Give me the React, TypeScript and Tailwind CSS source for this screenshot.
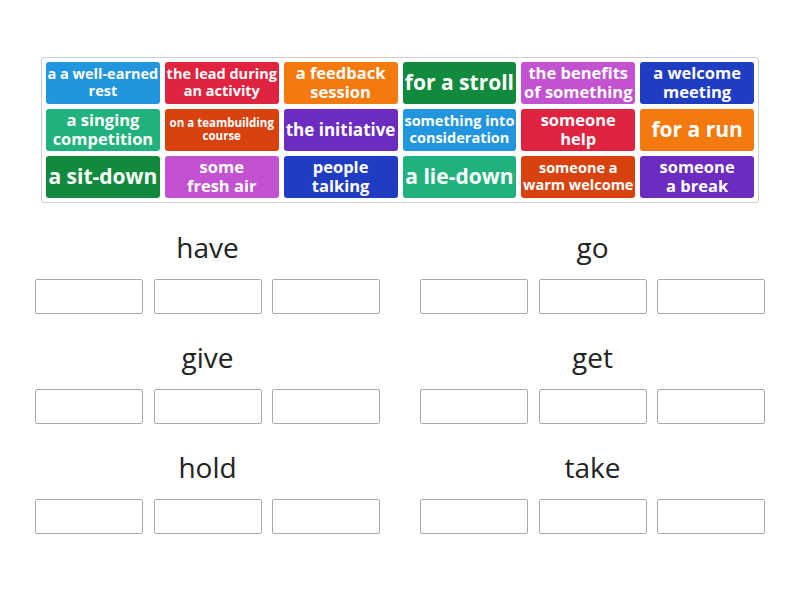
import React from "react";

interface Tile {
  text: string;
  bg: string;
  size: string;
}

const tiles: Tile[] = [
  { text: "a a well-earned rest", bg: "bg-[#2196de]", size: "text-[14.5px]" },
  { text: "the lead during an activity", bg: "bg-[#e0233f]", size: "text-[14.5px]" },
  { text: "a feedback session", bg: "bg-[#f47a0f]", size: "text-[16.5px]" },
  { text: "for a stroll", bg: "bg-[#128a3e]", size: "text-[21px]" },
  { text: "the benefits of something", bg: "bg-[#c352d1]", size: "text-[16.5px]" },
  { text: "a welcome meeting", bg: "bg-[#1f3dc3]", size: "text-[16.5px]" },
  { text: "a singing competition", bg: "bg-[#20b17c]", size: "text-[16.5px]" },
  { text: "on a teambuilding course", bg: "bg-[#d8420f]", size: "text-[11.5px]" },
  { text: "the initiative", bg: "bg-[#6b2cbf]", size: "text-[17px]" },
  { text: "something into consideration", bg: "bg-[#2196de]", size: "text-[14.5px]" },
  { text: "someone help", bg: "bg-[#e0233f]", size: "text-[16.5px]" },
  { text: "for a run", bg: "bg-[#f47a0f]", size: "text-[21px]" },
  { text: "a sit-down", bg: "bg-[#128a3e]", size: "text-[21px]" },
  { text: "some fresh air", bg: "bg-[#c352d1]", size: "text-[16.5px]" },
  { text: "people talking", bg: "bg-[#1f3dc3]", size: "text-[16.5px]" },
  { text: "a lie-down", bg: "bg-[#20b17c]", size: "text-[21px]" },
  { text: "someone a warm welcome", bg: "bg-[#d8420f]", size: "text-[14.5px]" },
  { text: "someone a break", bg: "bg-[#6b2cbf]", size: "text-[16.5px]" },
];

// two-line tiles break where the reference breaks them
const lines: Record<string, string[]> = {
  "a a well-earned rest": ["a a well-earned", "rest"],
  "the lead during an activity": ["the lead during", "an activity"],
  "a feedback session": ["a feedback", "session"],
  "the benefits of something": ["the benefits", "of something"],
  "a welcome meeting": ["a welcome", "meeting"],
  "a singing competition": ["a singing", "competition"],
  "on a teambuilding course": ["on a teambuilding", "course"],
  "something into consideration": ["something into", "consideration"],
  "someone help": ["someone", "help"],
  "some fresh air": ["some", "fresh air"],
  "people talking": ["people", "talking"],
  "someone a warm welcome": ["someone a", "warm welcome"],
  "someone a break": ["someone", "a break"],
};

const groups = ["have", "go", "give", "get", "hold", "take"];

function Group({ title }: { title: string }) {
  return (
    <div>
      <div className="h-[40px] leading-[36px] text-center text-[28px] text-[#222]">
        {title}
      </div>
      <div className="mt-[10px] flex justify-between">
        {[0, 1, 2].map((i) => (
          <div
            key={i}
            className="w-[108px] h-[35px] border border-[#aaaaaa] rounded-[2px] bg-white"
          />
        ))}
      </div>
    </div>
  );
}

export default function App() {
  return (
    <div
      className="w-[800px] h-[600px] bg-white overflow-hidden"
      style={{ fontFamily: '"Open Sans", "Noto Sans", sans-serif' }}
    >
      <div className="mx-auto mt-[57px] w-[718px] border border-[#cfcfcf] rounded-[3px] p-[4px] grid grid-cols-6 gap-[5px]">
        {tiles.map((t) => (
          <div
            key={t.text}
            className={`${t.bg} ${t.size} h-[42px] pb-[1px] rounded-[3px] flex flex-col items-center justify-center text-center text-white font-bold leading-[1.12] whitespace-nowrap overflow-hidden`}
          >
            {(lines[t.text] || [t.text]).map((l) => (
              <span key={l}>{l}</span>
            ))}
          </div>
        ))}
      </div>

      <div className="mx-auto mt-[26px] w-[730px] grid grid-cols-2 gap-x-[40px] gap-y-[25px]">
        {groups.map((g) => (
          <Group key={g} title={g} />
        ))}
      </div>
    </div>
  );
}
